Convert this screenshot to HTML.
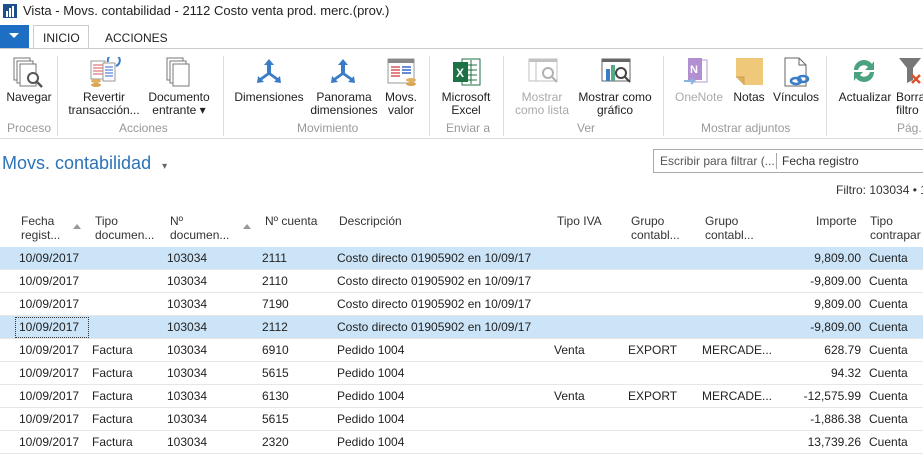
<!DOCTYPE html>
<html><head><meta charset="utf-8"><style>
*{margin:0;padding:0;box-sizing:border-box}
body{width:923px;height:469px;overflow:hidden;background:#fff;font-family:"Liberation Sans",sans-serif;font-size:12px;color:#222;position:relative}
.a{position:absolute;white-space:nowrap}
.lbl{position:absolute;text-align:center;font-size:12px;line-height:13px;color:#222}
.g{color:#aaa}
.gl{position:absolute;top:121px;font-size:12px;color:#999}
.sep{position:absolute;top:56px;width:1px;height:80px;background:#ddd}
.row{position:absolute;left:0;width:923px;height:23px;border-bottom:1px solid #e6e6e6}
.row span{position:absolute;top:4px;white-space:nowrap}
.sel{background:#cce4f7}
.h{position:absolute;top:214px;line-height:14px;color:#333}
</style></head><body>
<!-- title -->
<svg class="a" style="left:2px;top:3px" width="16" height="16"><rect x="1" y="1" width="14" height="14" fill="#1e4e8c"/><rect x="4" y="8" width="2" height="6" fill="#fff"/><rect x="7" y="5" width="2" height="9" fill="#fff"/><rect x="10" y="3" width="2" height="11" fill="#fff"/></svg>
<div class="a" style="left:23px;top:3px;font-size:13px">Vista - Movs. contabilidad - 2112 Costo venta prod. merc.(prov.)</div>
<!-- tabs -->
<div class="a" style="left:0;top:25px;width:29px;height:23px;background:#1e6fc4"></div>
<div class="a" style="left:9px;top:33px;width:0;height:0;border-left:5px solid transparent;border-right:5px solid transparent;border-top:5px solid #fff"></div>
<div class="a" style="left:33px;top:25px;width:56px;height:24px;border:1px solid #ccc;border-bottom:none;background:#fff"></div>
<div class="a" style="left:43px;top:31px;font-size:12px">INICIO</div>
<div class="a" style="left:105px;top:31px;font-size:12px">ACCIONES</div>
<div class="a" style="left:0;top:48px;width:923px;height:1px;background:#ccc"></div>
<div class="a" style="left:0;top:138px;width:923px;height:1px;background:#ddd"></div>
<!-- icons -->
<svg class="a" style="left:12px;top:57px" width="34" height="32"><rect x="2" y="1" width="16" height="22" fill="#fff" stroke="#777"/><rect x="5" y="4" width="16" height="22" fill="#fff" stroke="#777"/><rect x="8" y="7" width="16" height="22" fill="#fff" stroke="#777"/><circle cx="21" cy="21" r="5" fill="#fff" stroke="#555" stroke-width="2"/><path d="M25 25l5 5" stroke="#555" stroke-width="2.5"/></svg>
<svg class="a" style="left:88px;top:57px" width="34" height="32"><rect x="3" y="4" width="14" height="18" fill="#fff" stroke="#999"/><path d="M5 8h10M5 11h10M5 14h10M5 17h10" stroke="#d55"/><rect x="15" y="6" width="12" height="18" fill="#fff" stroke="#999"/><path d="M17 10h8M17 13h8M17 16h8M17 19h8" stroke="#36c"/><path d="M20 5a6 6 0 1 1 8 4" fill="none" stroke="#3a7cc6" stroke-width="2"/><ellipse cx="8" cy="24" rx="5" ry="2" fill="#e0b060"/><ellipse cx="8" cy="28" rx="5" ry="2" fill="#d9a550"/></svg>
<svg class="a" style="left:165px;top:57px" width="30" height="32"><rect x="2" y="1" width="16" height="22" fill="#fff" stroke="#777"/><rect x="5" y="4" width="16" height="22" fill="#fff" stroke="#777"/><rect x="8" y="7" width="16" height="22" fill="#fff" stroke="#777"/></svg>
<svg class="a" style="left:256px;top:58px" width="28" height="26" fill="#3a7cc6"><path d="M13 1l-5 6h3v8l-7 5-2-2-1 7 7-1-2-2 7-5 7 5-2 2 7 1-1-7-2 2-7-5V7h3z"/></svg>
<svg class="a" style="left:330px;top:58px" width="28" height="26" fill="#3a7cc6"><path d="M13 1l-5 6h3v8l-7 5-2-2-1 7 7-1-2-2 7-5 7 5-2 2 7 1-1-7-2 2-7-5V7h3z"/></svg>
<svg class="a" style="left:387px;top:58px" width="32" height="30"><rect x="1" y="1" width="26" height="24" fill="#fff" stroke="#999"/><rect x="1" y="1" width="26" height="4" fill="#888"/><path d="M4 9h9M4 12h9M4 15h9M4 18h9" stroke="#d55" stroke-width="1.5"/><path d="M15 9h9M15 12h9M15 15h9" stroke="#36c" stroke-width="1.5"/><ellipse cx="24" cy="22" rx="5" ry="2" fill="#e0b060"/><ellipse cx="24" cy="26" rx="5" ry="2" fill="#d9a550"/></svg>
<svg class="a" style="left:452px;top:57px" width="30" height="30"><rect x="10" y="2" width="18" height="26" fill="#fff" stroke="#1e7145"/><path d="M14 8h11M14 13h11M14 18h11M14 23h11M19 3v24" stroke="#1e7145"/><rect x="1" y="5" width="15" height="20" fill="#1e7145"/><text x="4" y="20" font-size="12" fill="#fff" font-weight="bold" font-family="Liberation Sans">X</text></svg>
<svg class="a" style="left:528px;top:58px" width="34" height="28" opacity="0.45"><rect x="1" y="1" width="28" height="22" fill="#fff" stroke="#777"/><rect x="1" y="1" width="28" height="3" fill="#777"/><path d="M8 4v19" stroke="#777"/><circle cx="20" cy="15" r="5" fill="#fff" stroke="#555" stroke-width="2"/><path d="M24 19l5 5" stroke="#555" stroke-width="2"/></svg>
<svg class="a" style="left:601px;top:58px" width="34" height="28"><rect x="1" y="1" width="28" height="22" fill="#fff" stroke="#666"/><rect x="1" y="1" width="28" height="3" fill="#666"/><rect x="5" y="11" width="4" height="12" fill="#3a7cc6"/><rect x="10" y="7" width="4" height="16" fill="#5a8"/><circle cx="20" cy="15" r="5" fill="#fff" stroke="#444" stroke-width="2"/><path d="M24 19l5 5" stroke="#444" stroke-width="2"/></svg>
<svg class="a" style="left:683px;top:57px" width="32" height="30"><rect x="12" y="3" width="12" height="22" fill="#fff" stroke="#b59bd0"/><rect x="5" y="1" width="14" height="22" fill="#b18fd0"/><text x="7" y="16" font-size="11" fill="#fff" font-weight="bold" font-family="Liberation Sans">N</text><path d="M1 24h10l-3-3M11 24l-3 3" stroke="#8ab4e0" stroke-width="2" fill="none"/></svg>
<svg class="a" style="left:735px;top:57px" width="30" height="30"><path d="M1 1h27v27H9l-8-8z" fill="#f0c87a"/><path d="M1 20h8v8" fill="#e0b060" stroke="#c9a050"/></svg>
<svg class="a" style="left:782px;top:57px" width="30" height="32"><path d="M3 1h14l7 7v21H3z" fill="#fff" stroke="#666"/><path d="M17 1v7h7" fill="none" stroke="#666"/><ellipse cx="14" cy="24" rx="5" ry="3" fill="none" stroke="#3a7cc6" stroke-width="2.5"/><ellipse cx="21" cy="22" rx="5" ry="3" fill="none" stroke="#3a7cc6" stroke-width="2.5"/></svg>
<svg class="a" style="left:850px;top:57px" width="28" height="28"><path d="M4 13a10 10 0 0 1 18-6l2-3v9h-9l3-3a6 6 0 0 0-10 3z" fill="#4aa37e"/><path d="M24 15a10 10 0 0 1-18 6l-2 3v-9h9l-3 3a6 6 0 0 0 10-3z" fill="#4aa37e"/></svg>
<svg class="a" style="left:898px;top:57px" width="25" height="30"><path d="M1 1h22l-8 10v12l-6 3V11z" fill="#777"/><path d="M14 18l8 8M22 18l-8 8" stroke="#d9532c" stroke-width="2.5"/></svg>
<!-- labels -->
<div class="lbl" style="left:2px;top:91px;width:54px">Navegar</div>
<div class="lbl" style="left:66px;top:91px;width:76px">Revertir<br>transacción...</div>
<div class="lbl" style="left:143px;top:91px;width:72px">Documento<br>entrante ▾</div>
<div class="lbl" style="left:233px;top:91px;width:72px">Dimensiones</div>
<div class="lbl" style="left:308px;top:91px;width:72px">Panorama<br>dimensiones</div>
<div class="lbl" style="left:381px;top:91px;width:40px">Movs.<br>valor</div>
<div class="lbl" style="left:436px;top:91px;width:60px">Microsoft<br>Excel</div>
<div class="lbl g" style="left:510px;top:91px;width:64px">Mostrar<br>como lista</div>
<div class="lbl" style="left:575px;top:91px;width:80px">Mostrar como<br>gráfico</div>
<div class="lbl g" style="left:672px;top:91px;width:54px">OneNote</div>
<div class="lbl" style="left:730px;top:91px;width:38px">Notas</div>
<div class="lbl" style="left:770px;top:91px;width:52px">Vínculos</div>
<div class="lbl" style="left:835px;top:91px;width:60px">Actualizar</div>
<div class="lbl" style="left:896px;top:91px;width:40px;text-align:left">Borrar<br>filtro</div>
<div class="gl" style="left:7px">Proceso</div>
<div class="gl" style="left:119px">Acciones</div>
<div class="gl" style="left:297px">Movimiento</div>
<div class="gl" style="left:446px">Enviar a</div>
<div class="gl" style="left:577px">Ver</div>
<div class="gl" style="left:701px">Mostrar adjuntos</div>
<div class="gl" style="left:897px">Pág.</div>
<div class="sep" style="left:57px"></div><div class="sep" style="left:223px"></div><div class="sep" style="left:429px"></div><div class="sep" style="left:503px"></div><div class="sep" style="left:663px"></div><div class="sep" style="left:826px"></div>
<!-- title & filter -->
<div class="a" style="left:2px;top:153px;font-size:18px;color:#2c73b8">Movs. contabilidad <span style="font-size:10px;color:#666;margin-left:6px">▾</span></div>
<div class="a" style="left:653px;top:149px;width:280px;height:24px;border:1px solid #aaa"></div>
<div class="a" style="left:660px;top:154px;color:#555">Escribir para filtrar (...</div>
<div class="a" style="left:776px;top:153px;width:1px;height:16px;background:#aaa"></div>
<div class="a" style="left:782px;top:154px;color:#333">Fecha registro</div>
<div class="a" style="left:836px;top:183px;color:#333">Filtro: 103034 • 10</div>
<!-- headers -->
<div class="h" style="left:21px">Fecha<br>regist...</div>
<div class="a" style="left:73px;top:224px;border-left:4px solid transparent;border-right:4px solid transparent;border-bottom:5px solid #999"></div>
<div class="h" style="left:95px">Tipo<br>documen...</div>
<div class="h" style="left:170px">Nº<br>documen...</div>
<div class="a" style="left:243px;top:224px;border-left:4px solid transparent;border-right:4px solid transparent;border-bottom:5px solid #999"></div>
<div class="h" style="left:265px">Nº cuenta</div>
<div class="h" style="left:339px">Descripción</div>
<div class="h" style="left:557px">Tipo IVA</div>
<div class="h" style="left:631px">Grupo<br>contabl...</div>
<div class="h" style="left:705px">Grupo<br>contabl...</div>
<div class="h" style="left:816px">Importe</div>
<div class="h" style="left:870px">Tipo<br>contrapar</div>
<!-- rows -->
<div class="row sel" style="top:247px"><span style="left:19px">10/09/2017</span><span style="left:167px">103034</span><span style="left:262px">2111</span><span style="left:337px">Costo directo 01905902 en 10/09/17</span><span style="right:62px">9,809.00</span><span style="left:869px">Cuenta</span></div>
<div class="row" style="top:270px"><span style="left:19px">10/09/2017</span><span style="left:167px">103034</span><span style="left:262px">2110</span><span style="left:337px">Costo directo 01905902 en 10/09/17</span><span style="right:62px">-9,809.00</span><span style="left:869px">Cuenta</span></div>
<div class="row" style="top:293px"><span style="left:19px">10/09/2017</span><span style="left:167px">103034</span><span style="left:262px">7190</span><span style="left:337px">Costo directo 01905902 en 10/09/17</span><span style="right:62px">9,809.00</span><span style="left:869px">Cuenta</span></div>
<div class="row sel" style="top:316px"><span style="left:15px;top:1px;height:21px;width:74px;border:1px dotted #333;padding:2px 0 0 3px">10/09/2017</span><span style="left:167px">103034</span><span style="left:262px">2112</span><span style="left:337px">Costo directo 01905902 en 10/09/17</span><span style="right:62px">-9,809.00</span><span style="left:869px">Cuenta</span></div>
<div class="row" style="top:339px"><span style="left:19px">10/09/2017</span><span style="left:92px">Factura</span><span style="left:167px">103034</span><span style="left:262px">6910</span><span style="left:337px">Pedido 1004</span><span style="left:554px">Venta</span><span style="left:628px">EXPORT</span><span style="left:702px">MERCADE...</span><span style="right:62px">628.79</span><span style="left:869px">Cuenta</span></div>
<div class="row" style="top:362px"><span style="left:19px">10/09/2017</span><span style="left:92px">Factura</span><span style="left:167px">103034</span><span style="left:262px">5615</span><span style="left:337px">Pedido 1004</span><span style="right:62px">94.32</span><span style="left:869px">Cuenta</span></div>
<div class="row" style="top:385px"><span style="left:19px">10/09/2017</span><span style="left:92px">Factura</span><span style="left:167px">103034</span><span style="left:262px">6130</span><span style="left:337px">Pedido 1004</span><span style="left:554px">Venta</span><span style="left:628px">EXPORT</span><span style="left:702px">MERCADE...</span><span style="right:62px">-12,575.99</span><span style="left:869px">Cuenta</span></div>
<div class="row" style="top:408px"><span style="left:19px">10/09/2017</span><span style="left:92px">Factura</span><span style="left:167px">103034</span><span style="left:262px">5615</span><span style="left:337px">Pedido 1004</span><span style="right:62px">-1,886.38</span><span style="left:869px">Cuenta</span></div>
<div class="row" style="top:431px"><span style="left:19px">10/09/2017</span><span style="left:92px">Factura</span><span style="left:167px">103034</span><span style="left:262px">2320</span><span style="left:337px">Pedido 1004</span><span style="right:62px">13,739.26</span><span style="left:869px">Cuenta</span></div>
</body></html>
